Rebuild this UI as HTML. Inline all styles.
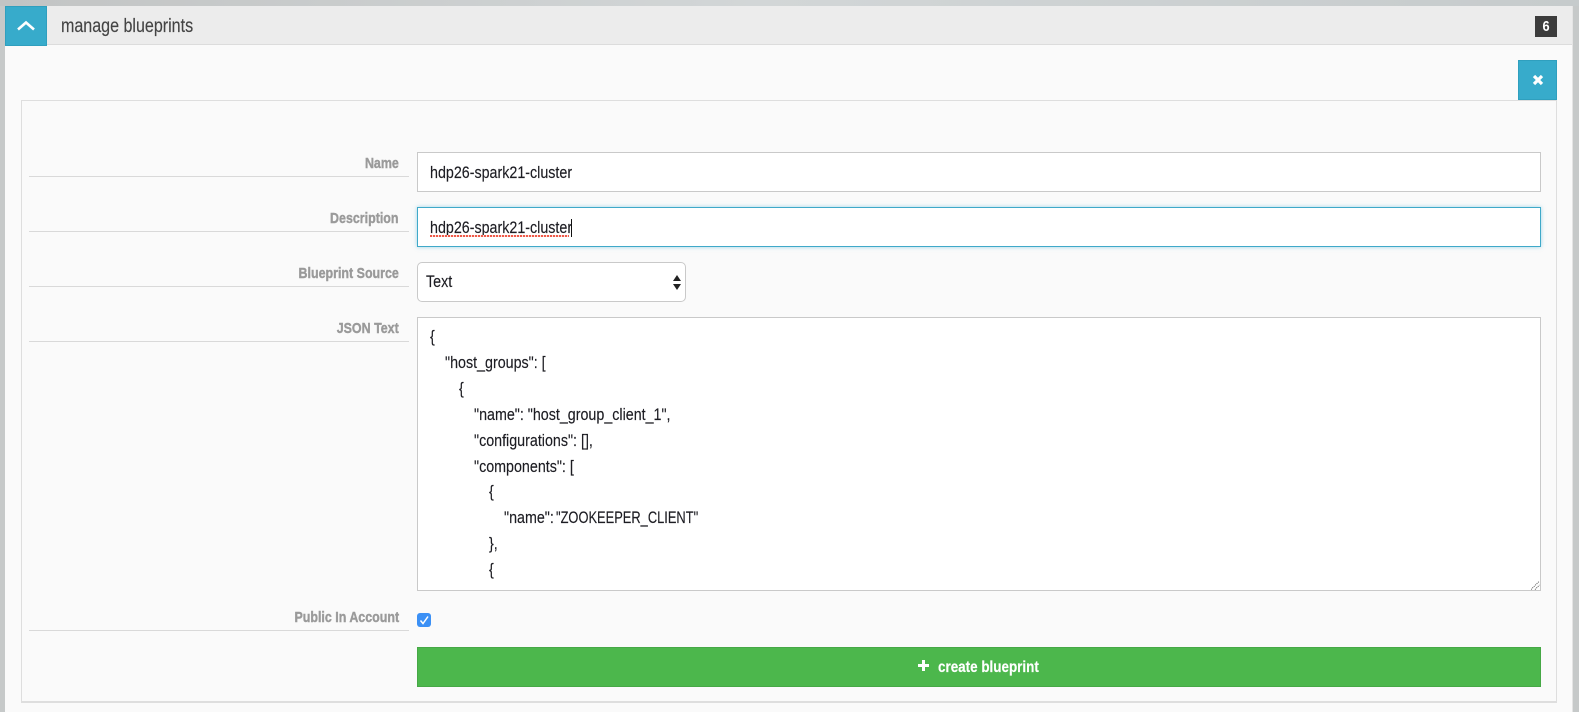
<!DOCTYPE html>
<html>
<head>
<meta charset="utf-8">
<style>
html,body{margin:0;padding:0;width:1579px;height:712px;overflow:hidden;background:#c6c9c9;font-family:"Liberation Sans",sans-serif}
div,span{position:absolute;box-sizing:border-box}
.t{white-space:pre;transform-origin:0 50%;transform:scaleX(.84);color:#1c1c22;font-size:17px;line-height:20px;height:20px;-webkit-text-stroke:.15px currentColor}
.l{white-space:pre;transform-origin:100% 50%;transform:scaleX(.83);color:#9a9a9a;font-size:15px;font-weight:bold;line-height:18px;height:18px;right:1180px;-webkit-text-stroke:.4px #9a9a9a}
.r{left:29px;width:380px;height:1px;background:#d9d9d9}
.i{background:#fff;border:1px solid #c9c9c9}
</style>
</head>
<body>
<div style="left:0;top:0;width:1579px;height:6px;background:linear-gradient(90deg,#c2c4c4,#d2d6d7 48%,#c6cbcc)"></div>
<div style="left:5px;top:6px;width:1568px;height:706px;background:#fafafa;border-right:1px solid #e4e4e4"></div>
<div style="left:5px;top:6px;width:1567px;height:39px;background:#ececec;border-bottom:1px solid #dcdcdc"></div>
<div style="left:5px;top:6px;width:42px;height:40px;background:#37abcb;border:1px solid #2f9fbe"></div>
<svg style="position:absolute;left:17px;top:20px" width="20" height="11" viewBox="0 0 20 11"><path d="M1 9.500L9 2.500L17 9.500" fill="none" stroke="#fff" stroke-width="2.6"/></svg>
<div class="t" style="left:61px;top:17px;font-size:19px;color:#444;transform:scaleX(.845)">manage blueprints</div>
<div style="left:1535px;top:16px;width:22px;height:21px;background:#3c3c3c"></div>
<div style="left:1535px;top:16px;width:22px;height:21px;color:#fff;font-weight:bold;font-size:15px;line-height:21px;text-align:center;transform:scaleX(.85)">6</div>

<div style="left:21px;top:100px;width:1536px;height:603px;border:1px solid #dedede;border-bottom-width:2px;background:#fafafa"></div>
<div style="left:1518px;top:60px;width:39px;height:40px;background:#37abcb;border:1px solid #2f9fbe"></div>
<svg style="position:absolute;left:1532px;top:74px" width="12" height="12" viewBox="0 0 12 12"><path d="M2 2L10 10M10 2L2 10" fill="none" stroke="#fff" stroke-width="3.2"/></svg>

<div class="l" style="top:155px">Name</div>
<div class="r" style="top:176px"></div>
<div class="l" style="top:210px">Description</div>
<div class="r" style="top:231px"></div>
<div class="l" style="top:265px">Blueprint Source</div>
<div class="r" style="top:286px"></div>
<div class="l" style="top:320px">JSON Text</div>
<div class="r" style="top:341px"></div>
<div class="l" style="top:609px">Public In Account</div>
<div class="r" style="top:630px"></div>

<div class="i" style="left:417px;top:152px;width:1124px;height:40px"></div>
<div class="t" style="left:430px;top:163px">hdp26-spark21-cluster</div>

<div class="i" style="left:417px;top:207px;width:1124px;height:40px;border-color:#3fa9c9;box-shadow:0 0 4px rgba(80,180,215,.55)"></div>
<div class="t" style="left:430px;top:218px">hdp26-spark21-cluster</div>
<div style="left:430px;top:235px;width:139px;height:2px;background:repeating-linear-gradient(90deg,#ef5a4a 0 2px,#fbe2dc 2px 3px)"></div>
<div style="left:571px;top:219px;width:1px;height:18px;background:#111"></div>

<div class="i" style="left:417px;top:262px;width:269px;height:40px;border-radius:5px"></div>
<div class="t" style="left:426px;top:272px">Text</div>
<svg style="position:absolute;left:672px;top:274px" width="10" height="17" viewBox="0 0 10 17"><path d="M5 1L9 7H1ZM5 16L1 10H9Z" fill="#222"/></svg>

<div class="i" style="left:417px;top:317px;width:1124px;height:274px;overflow:hidden">
<div class="t" style="left:12px;top:9px">{</div>
<div class="t" style="left:27px;top:35px">"host_groups": [</div>
<div class="t" style="left:41px;top:61px">{</div>
<div class="t" style="left:56px;top:87px">"name": "host_group_client_1",</div>
<div class="t" style="left:56px;top:113px">"configurations": [],</div>
<div class="t" style="left:56px;top:139px">"components": [</div>
<div class="t" style="left:71px;top:164px">{</div>
<div class="t" style="left:86px;top:190px">"name": </div>
<div class="t" style="left:138px;top:190px;transform:scaleX(.757)">"ZOOKEEPER_CLIENT"</div>
<div class="t" style="left:71px;top:216px">},</div>
<div class="t" style="left:71px;top:242px">{</div>
<div class="t" style="left:86px;top:270px">"name": "HDFS_CLIENT"</div>
</div>
<svg style="position:absolute;left:1531px;top:581px" width="9" height="9" viewBox="0 0 9 9"><path d="M0 8.500L8.500 0M4 8.500L8.500 4" fill="none" stroke="#555" stroke-width="1" stroke-dasharray="1 1"/></svg>

<div style="left:417px;top:613px;width:14px;height:14px;background:#3b90f5;border-radius:3px"></div>
<svg style="position:absolute;left:417px;top:613px" width="14" height="14" viewBox="0 0 14 14"><path d="M3.500 7.500L6 10.500L11 3.500" fill="none" stroke="#fff" stroke-width="1.500"/></svg>

<div style="left:417px;top:647px;width:1124px;height:40px;background:#4cb74c;border:1px solid #46a846"></div>
<svg style="position:absolute;left:917px;top:659px" width="13" height="13" viewBox="0 0 13 13"><path d="M6.500 1V12M1 6.500H12" fill="none" stroke="#fff" stroke-width="3"/></svg>
<div class="t" style="left:938px;top:658px;color:#fff;font-weight:bold;font-size:16px">create blueprint</div>
</body>
</html>
